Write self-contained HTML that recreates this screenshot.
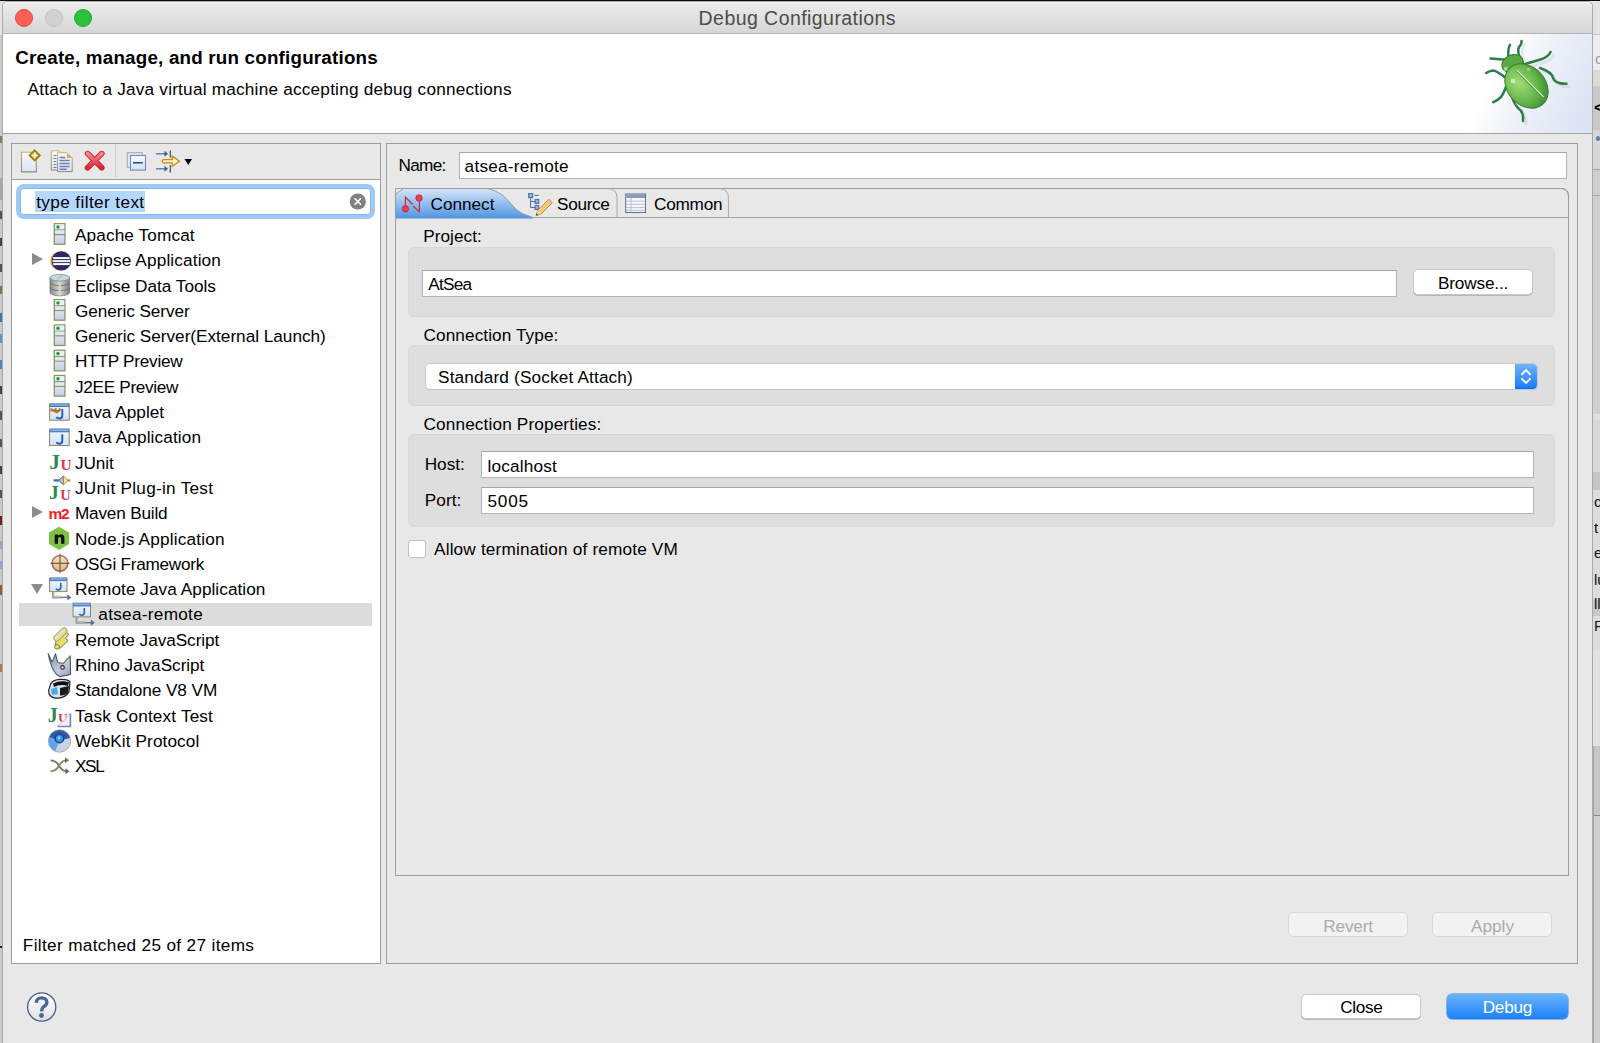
<!DOCTYPE html>
<html><head><meta charset="utf-8"><style>
*{margin:0;padding:0;box-sizing:border-box}
html,body{width:1600px;height:1043px;overflow:hidden;background:#e8e8e8}
body{position:relative;font-family:"Liberation Sans",sans-serif}
.t{position:absolute;white-space:nowrap;line-height:1;z-index:2}
#bg{position:absolute;left:0;top:0;width:1600px;height:1043px;background:#e6e6e6}
#win{position:absolute;left:2px;top:1px;width:1591px;height:1045px;background:#e8e8e8;border:1px solid #a9a9a9;border-radius:5px 5px 0 0;overflow:hidden}
#titlebar{position:absolute;left:3px;top:2px;width:1589px;height:32px;background:linear-gradient(#ececec,#d6d6d6);border-bottom:1px solid #b4b4b4;border-radius:5px 5px 0 0;box-shadow:inset 0 1px 0 #f6f6f6}
.tl{position:absolute;width:18px;height:18px;border-radius:50%;border:1px solid}
#header{position:absolute;left:3px;top:34px;width:1589px;height:100px;background:#fff;border-bottom:1px solid #a5a5a5;overflow:hidden}
#lpanel{position:absolute;left:11px;top:143px;width:370px;height:821px;background:#fff;border:1px solid #9d9d9d}
#ltool{position:absolute;left:0;top:0;width:368px;height:36px;background:#e8e8e8;border-bottom:1px solid #9d9d9d}
#tsep{position:absolute;left:115px;top:144px;width:1px;height:33px;background:#cfcfcf}
#filter{position:absolute;left:16px;top:184px;width:359px;height:35px;border:4.5px solid #9fcaf7;border-radius:8px;background:#fff;box-shadow:inset 0 0 0 1px #86b5e6}
#fsel{position:absolute;left:15px;top:3px;width:110px;height:21px;background:#b4d7fe}
#fclear{position:absolute;left:350px;top:193px;width:16px;height:16px;border-radius:50%;background:#808080}
#sel{position:absolute;left:19px;top:603px;width:353px;height:23px;background:#dcdcdc}
.tri-r{position:absolute;width:0;height:0;border-top:6.5px solid transparent;border-bottom:6.5px solid transparent;border-left:11px solid #8c8c8c}
.tri-d{position:absolute;width:0;height:0;border-left:6.75px solid transparent;border-right:6.75px solid transparent;border-top:10.5px solid #8c8c8c}
.ic{position:absolute;width:22px;height:22px}
#rpanel{position:absolute;left:386px;top:143px;width:1192px;height:821px;border:1px solid #9d9d9d}
.tf{position:absolute;background:#fff;border:1px solid #b4b4b4;border-top-color:#a6a6a6}
#tabfolder{position:absolute;left:395px;top:188px;width:1174px;height:688px;border:1px solid #9d9d9d;border-radius:0 7px 0 0}
#tabrow{position:absolute;left:396px;top:217px;width:1172px;height:1px;background:#9d9d9d}
.grp{position:absolute;background:#dedede;border:1px solid #d7d7d7;border-radius:6px}
.btn{position:absolute;background:#fff;border:1px solid #c8c8c8;border-radius:5px;box-shadow:0 1px 0 #b8b8b8}
.btn.dis{background:#f2f2f2;border-color:#d9d9d9;box-shadow:none}
#combo{position:absolute;left:426px;top:364px;width:111px;height:25px;width:1111px;background:#fff;border-radius:4px;box-shadow:0 0 0 1px #c8c8c8, 0 1px 0 #b0b0b0}
#chk{position:absolute;left:408px;top:540px;width:18px;height:18px;background:#fff;border:1px solid #c0c0c0;border-radius:3px}
#help{position:absolute;left:27px;top:993px;width:30px;height:30px;border-radius:50%;border:1.5px solid #4a6283;background:linear-gradient(#fff,#e4e4e4)}
#debugbtn{position:absolute;left:1447px;top:994px;width:121px;height:25px;border-radius:5px;background:linear-gradient(#6cb3fa,#1a82fb);box-shadow:0 0 0 0.5px #2f7fe0}
#ov{position:absolute;left:0;top:0;pointer-events:none;z-index:1}
#hgrad{position:absolute;right:0;top:0;width:170px;height:99px;background:linear-gradient(116deg, rgba(255,255,255,0) 42%, #eef1f9 62%, #e3e8f5 82%, #dbe2f3 100%)}

</style></head><body>
<div id="bg"></div>
<div style="position:absolute;left:0;top:0;width:1600px;height:1px;background:#0a0c10;z-index:3"></div>
<div style="position:absolute;left:0;top:1px;width:2px;height:1042px;background:#c9c9c9"></div>
<div style="position:absolute;left:0;top:1px;width:2px;height:34px;background:#e4e4e4"></div>
<div style="position:absolute;left:0;top:136px;width:2px;height:7px;background:#8a7a5a"></div>
<div style="position:absolute;left:0;top:178px;width:2px;height:22px;background:#a8a8a8"></div>
<div style="position:absolute;left:0;top:211px;width:2px;height:8px;background:#555"></div>
<div style="position:absolute;left:0;top:238px;width:2px;height:8px;background:#444"></div>
<div style="position:absolute;left:0;top:264px;width:2px;height:8px;background:#555"></div>
<div style="position:absolute;left:0;top:286px;width:2px;height:8px;background:#8a7050"></div>
<div style="position:absolute;left:0;top:313px;width:2px;height:9px;background:#4a70a8"></div>
<div style="position:absolute;left:0;top:334px;width:2px;height:9px;background:#6a90c0"></div>
<div style="position:absolute;left:0;top:360px;width:2px;height:9px;background:#5a80b8"></div>
<div style="position:absolute;left:0;top:386px;width:2px;height:8px;background:#444"></div>
<div style="position:absolute;left:0;top:411px;width:2px;height:9px;background:#555"></div>
<div style="position:absolute;left:0;top:439px;width:2px;height:8px;background:#555"></div>
<div style="position:absolute;left:0;top:466px;width:2px;height:8px;background:#444"></div>
<div style="position:absolute;left:0;top:490px;width:2px;height:8px;background:#555"></div>
<div style="position:absolute;left:0;top:516px;width:2px;height:9px;background:#6a2020"></div>
<div style="position:absolute;left:0;top:541px;width:2px;height:8px;background:#8aa8d0"></div>
<div style="position:absolute;left:0;top:561px;width:2px;height:8px;background:#8aa8d0"></div>
<div style="position:absolute;left:0;top:585px;width:2px;height:10px;background:#8a6030"></div>
<div style="position:absolute;left:0;top:664px;width:2px;height:8px;background:#a08050"></div>
<div style="position:absolute;left:0;top:946px;width:2px;height:2px;background:#222"></div>
<div style="position:absolute;left:1593px;top:1px;width:7px;height:33px;background:#e4e4e4"></div>
<div style="position:absolute;left:1593px;top:34px;width:7px;height:1px;background:#c4c4c4"></div>
<div style="position:absolute;left:1593px;top:35px;width:7px;height:35px;background:#ededed"></div>
<div style="position:absolute;left:1593px;top:70px;width:7px;height:16px;background:#d9d9d9"></div>
<div style="position:absolute;left:1593px;top:79px;width:7px;height:2px;background:#e8dcc0"></div>
<div style="position:absolute;left:1593px;top:86px;width:7px;height:44px;background:#c9c9c9"></div>
<div style="position:absolute;left:1593px;top:130px;width:7px;height:39px;background:#d6d6d6"></div>
<div style="position:absolute;left:1593px;top:169px;width:7px;height:1px;background:#a8a8a8"></div>
<div style="position:absolute;left:1593px;top:170px;width:7px;height:25px;background:#cfcfcf"></div>
<div style="position:absolute;left:1593px;top:195px;width:7px;height:1px;background:#a8a8a8"></div>
<div style="position:absolute;left:1593px;top:196px;width:7px;height:218px;background:#cfcfcf"></div>
<div style="position:absolute;left:1593px;top:414px;width:7px;height:6px;background:#e0e0e0"></div>
<div style="position:absolute;left:1593px;top:420px;width:7px;height:70px;background:#d8d8d8"></div>
<div style="position:absolute;left:1593px;top:472px;width:7px;height:18px;background:#c6c6c6"></div>
<div style="position:absolute;left:1593px;top:490px;width:7px;height:160px;background:#dcdcdc"></div>
<div style="position:absolute;left:1593px;top:600px;width:7px;height:16px;background:#c8c8c8"></div>
<div style="position:absolute;left:1593px;top:650px;width:7px;height:96px;background:#e2e2e2"></div>
<div style="position:absolute;left:1593px;top:746px;width:7px;height:69px;background:#c6c6c6"></div>
<div style="position:absolute;left:1593px;top:815px;width:7px;height:1px;background:#8a8a8a"></div>
<div style="position:absolute;left:1593px;top:816px;width:7px;height:227px;background:#d0d0d0"></div>
<div class="t" style="left:1594.00px;top:494.30px;font-size:15px;color:#111;letter-spacing:0.000px;">c</div>
<div class="t" style="left:1594.00px;top:520.30px;font-size:15px;color:#111;letter-spacing:0.000px;">t</div>
<div class="t" style="left:1594.00px;top:545.30px;font-size:15px;color:#111;letter-spacing:0.000px;">e</div>
<div class="t" style="left:1594.00px;top:572.30px;font-size:15px;color:#111;letter-spacing:0.000px;">lu</div>
<div class="t" style="left:1594.00px;top:596.30px;font-size:15px;color:#111;letter-spacing:0.000px;">ll</div>
<div class="t" style="left:1594.00px;top:618.30px;font-size:15px;color:#111;letter-spacing:0.000px;">Pr</div>
<div class="t" style="left:1595.00px;top:51.30px;font-size:15px;color:#999;letter-spacing:0.000px;">c</div>
<div class="t" style="left:1594.00px;top:98.61px;font-size:17px;color:#000;font-weight:bold;letter-spacing:0.000px;">&lt;</div>
<div style="position:absolute;left:1596px;top:136px;width:4px;height:5px;background:#5a7fb0;border-radius:2px"></div>
<div style="position:absolute;left:1593px;top:746px;width:1px;height:297px;background:#a8a8a8"></div>
<div id="win"></div>
<div id="titlebar"></div>
<div class="tl" style="left:15px;top:9px;background:#fe5f57;border-color:#e2463f"></div>
<div class="tl" style="left:45px;top:9px;background:#d1d1d1;border-color:#c3c3c3"></div>
<div class="tl" style="left:74px;top:9px;background:#29c23e;border-color:#1aab29"></div>
<div class="t" style="left:698.60px;top:8.69px;font-size:19.5px;color:#4c4c4c;letter-spacing:0.439px;">Debug Configurations</div>
<div id="header"><div id="hgrad"></div></div>
<div class="t" style="left:15.30px;top:49.09px;font-size:18.8px;color:#000;font-weight:bold;letter-spacing:0.205px;">Create, manage, and run configurations</div>
<div class="t" style="left:27.60px;top:81.24px;font-size:17.2px;color:#000;letter-spacing:0.218px;">Attach to a Java virtual machine accepting debug connections</div>
<div id="lpanel"><div id="ltool"></div></div>
<div id="tsep"></div>
<div id="filter"><div id="fsel"></div></div>
<div class="t" style="left:36.20px;top:193.94px;font-size:17.2px;color:#000;letter-spacing:0.383px;">type filter text</div>
<div id="sel"></div>
<div class="t" style="left:75.00px;top:226.94px;font-size:17.2px;color:#000;letter-spacing:0.121px;">Apache Tomcat</div>
<div class="t" style="left:75.00px;top:252.24px;font-size:17.2px;color:#000;letter-spacing:0.142px;">Eclipse Application</div>
<div class="tri-r" style="left:32px;top:253.3px"></div>
<div class="t" style="left:75.00px;top:277.54px;font-size:17.2px;color:#000;letter-spacing:-0.012px;">Eclipse Data Tools</div>
<div class="t" style="left:75.00px;top:302.84px;font-size:17.2px;color:#000;letter-spacing:-0.067px;">Generic Server</div>
<div class="t" style="left:75.00px;top:328.14px;font-size:17.2px;color:#000;letter-spacing:-0.015px;">Generic Server(External Launch)</div>
<div class="t" style="left:75.00px;top:353.44px;font-size:17.2px;color:#000;letter-spacing:-0.245px;">HTTP Preview</div>
<div class="t" style="left:75.00px;top:378.74px;font-size:17.2px;color:#000;letter-spacing:-0.323px;">J2EE Preview</div>
<div class="t" style="left:75.00px;top:404.04px;font-size:17.2px;color:#000;letter-spacing:0.028px;">Java Applet</div>
<div class="t" style="left:75.00px;top:429.34px;font-size:17.2px;color:#000;letter-spacing:0.115px;">Java Application</div>
<div class="t" style="left:75.00px;top:454.64px;font-size:17.2px;color:#000;letter-spacing:-0.104px;">JUnit</div>
<div class="t" style="left:75.00px;top:479.94px;font-size:17.2px;color:#000;letter-spacing:0.267px;">JUnit Plug-in Test</div>
<div class="t" style="left:75.00px;top:505.24px;font-size:17.2px;color:#000;letter-spacing:-0.199px;">Maven Build</div>
<div class="tri-r" style="left:32px;top:506.3px"></div>
<div class="t" style="left:75.00px;top:530.54px;font-size:17.2px;color:#000;letter-spacing:0.190px;">Node.js Application</div>
<div class="t" style="left:75.00px;top:555.84px;font-size:17.2px;color:#000;letter-spacing:-0.266px;">OSGi Framework</div>
<div class="t" style="left:75.00px;top:581.14px;font-size:17.2px;color:#000;letter-spacing:0.055px;">Remote Java Application</div>
<div class="tri-d" style="left:31px;top:583.7px"></div>
<div class="t" style="left:98.30px;top:606.44px;font-size:17.2px;color:#000;letter-spacing:0.290px;">atsea-remote</div>
<div class="t" style="left:75.00px;top:631.74px;font-size:17.2px;color:#000;letter-spacing:-0.053px;">Remote JavaScript</div>
<div class="t" style="left:75.00px;top:657.04px;font-size:17.2px;color:#000;letter-spacing:-0.035px;">Rhino JavaScript</div>
<div class="t" style="left:75.00px;top:682.34px;font-size:17.2px;color:#000;letter-spacing:-0.070px;">Standalone V8 VM</div>
<div class="t" style="left:75.00px;top:707.64px;font-size:17.2px;color:#000;letter-spacing:0.159px;">Task Context Test</div>
<div class="t" style="left:75.00px;top:732.94px;font-size:17.2px;color:#000;letter-spacing:0.094px;">WebKit Protocol</div>
<div class="t" style="left:75.00px;top:758.24px;font-size:17.2px;color:#000;letter-spacing:-1.354px;">XSL</div>
<div class="t" style="left:22.80px;top:937.14px;font-size:17.2px;color:#000;letter-spacing:0.340px;">Filter matched 25 of 27 items</div>
<div id="rpanel"></div>
<div class="t" style="left:398.40px;top:157.44px;font-size:17.2px;color:#000;letter-spacing:-0.663px;">Name:</div>
<div class="tf" style="left:459px;top:152px;width:1108px;height:27px"></div>
<div class="t" style="left:464.60px;top:158.44px;font-size:17.2px;color:#000;letter-spacing:0.245px;">atsea-remote</div>
<div id="tabfolder"></div>
<div id="tabrow"></div>
<div class="t" style="left:430.50px;top:196.14px;font-size:17.2px;color:#000;letter-spacing:-0.012px;">Connect</div>
<div class="t" style="left:557.00px;top:196.14px;font-size:17.2px;color:#000;letter-spacing:-0.305px;">Source</div>
<div class="t" style="left:654.00px;top:196.14px;font-size:17.2px;color:#000;letter-spacing:-0.229px;">Common</div>
<div class="t" style="left:423.30px;top:228.44px;font-size:17.2px;color:#000;letter-spacing:0.027px;">Project:</div>
<div class="grp" style="left:408px;top:247px;width:1147px;height:70px"></div>
<div class="tf" style="left:422px;top:270px;width:975px;height:27px"></div>
<div class="t" style="left:428.30px;top:276.44px;font-size:17.2px;color:#000;letter-spacing:-0.739px;">AtSea</div>
<div class="btn" style="left:1413px;top:269px;width:120px;height:26px"></div>
<div class="t" style="left:1438.00px;top:274.94px;font-size:17.2px;color:#000;letter-spacing:-0.165px;">Browse...</div>
<div class="t" style="left:423.50px;top:326.84px;font-size:17.2px;color:#000;letter-spacing:0.096px;">Connection Type:</div>
<div class="grp" style="left:408px;top:345px;width:1147px;height:61px"></div>
<div id="combo"></div>
<div class="t" style="left:438.00px;top:368.64px;font-size:17.2px;color:#000;letter-spacing:0.162px;">Standard (Socket Attach)</div>
<div class="t" style="left:423.50px;top:416.14px;font-size:17.2px;color:#000;letter-spacing:0.142px;">Connection Properties:</div>
<div class="grp" style="left:408px;top:434px;width:1147px;height:93px"></div>
<div class="t" style="left:424.75px;top:456.44px;font-size:17.2px;color:#000;letter-spacing:-0.040px;">Host:</div>
<div class="tf" style="left:481px;top:451px;width:1053px;height:27px"></div>
<div class="t" style="left:487.50px;top:457.64px;font-size:17.2px;color:#000;letter-spacing:0.193px;">localhost</div>
<div class="t" style="left:424.75px;top:492.04px;font-size:17.2px;color:#000;letter-spacing:0.052px;">Port:</div>
<div class="tf" style="left:481px;top:487px;width:1053px;height:27px"></div>
<div class="t" style="left:487.50px;top:493.34px;font-size:17.2px;color:#000;letter-spacing:0.777px;">5005</div>
<div id="chk"></div>
<div class="t" style="left:434.00px;top:540.84px;font-size:17.2px;color:#000;letter-spacing:0.173px;">Allow termination of remote VM</div>
<div class="btn dis" style="left:1288px;top:912px;width:120px;height:25px"></div>
<div class="t" style="left:1323.30px;top:917.64px;font-size:17.2px;color:#ababab;letter-spacing:-0.191px;">Revert</div>
<div class="btn dis" style="left:1432px;top:912px;width:120px;height:25px"></div>
<div class="t" style="left:1471.00px;top:917.64px;font-size:17.2px;color:#ababab;letter-spacing:0.000px;">Apply</div>
<div class="btn" style="left:1301px;top:994px;width:120px;height:25px"></div>
<div class="t" style="left:1340.30px;top:999.44px;font-size:17.2px;color:#000;letter-spacing:-0.361px;">Close</div>
<div id="debugbtn"></div>
<div class="t" style="left:1482.70px;top:999.44px;font-size:17.2px;color:#fff;letter-spacing:-0.238px;">Debug</div>
<svg id="ov" width="1600" height="1043" viewBox="0 0 1600 1043">
<defs>
<linearGradient id="gPage" x1="0" y1="0" x2="0" y2="1"><stop offset="0" stop-color="#f7f9fd"/><stop offset="1" stop-color="#d9e5f5"/></linearGradient>
<linearGradient id="gPageB" x1="0" y1="0" x2="0" y2="1"><stop offset="0" stop-color="#d2b25e"/><stop offset="1" stop-color="#8c8a74"/></linearGradient>
<linearGradient id="gRedX" x1="0" y1="0" x2="0" y2="1"><stop offset="0" stop-color="#f58a8a"/><stop offset="1" stop-color="#d92a3a"/></linearGradient>
<linearGradient id="gSrvB" x1="0" y1="0" x2="0" y2="1"><stop offset="0" stop-color="#fbfcff"/><stop offset="1" stop-color="#c5cde6"/></linearGradient>
<linearGradient id="gWin" x1="0" y1="0" x2="0" y2="1"><stop offset="0" stop-color="#f4f9ff"/><stop offset="1" stop-color="#cfe4fa"/></linearGradient>
<linearGradient id="gWinT" x1="0" y1="0" x2="0" y2="1"><stop offset="0" stop-color="#6b9bd8"/><stop offset="1" stop-color="#3f77c4"/></linearGradient>
<linearGradient id="gDB" x1="0" y1="0" x2="1" y2="0"><stop offset="0" stop-color="#8a8a8a"/><stop offset="0.5" stop-color="#d8d8d8"/><stop offset="1" stop-color="#7a7a7a"/></linearGradient>
<linearGradient id="gOsgi" x1="0" y1="0" x2="0" y2="1"><stop offset="0" stop-color="#f3e6c0"/><stop offset="1" stop-color="#d7c08a"/></linearGradient>
<linearGradient id="gTab" x1="0" y1="0" x2="0" y2="1"><stop offset="0" stop-color="#d6e6f9"/><stop offset="1" stop-color="#4f95e4"/></linearGradient>
<linearGradient id="gRhino" x1="0" y1="0" x2="1" y2="1"><stop offset="0" stop-color="#7d8aa2"/><stop offset="0.6" stop-color="#c6cedd"/><stop offset="1" stop-color="#8f9bb3"/></linearGradient>
<linearGradient id="gHelp" x1="0" y1="0" x2="0" y2="1"><stop offset="0" stop-color="#ffffff"/><stop offset="1" stop-color="#e1e1e1"/></linearGradient>
<radialGradient id="gBug" cx="0.4" cy="0.35" r="0.7"><stop offset="0" stop-color="#a2dc78"/><stop offset="0.6" stop-color="#66b84c"/><stop offset="1" stop-color="#3f8c36"/></radialGradient>
<radialGradient id="gWK" cx="0.5" cy="0.5" r="0.5"><stop offset="0" stop-color="#dfe8f3"/><stop offset="1" stop-color="#aab8cb"/></radialGradient>
<linearGradient id="gCombo" x1="0" y1="0" x2="0" y2="1"><stop offset="0" stop-color="#72b3f8"/><stop offset="0.9" stop-color="#1d82fb"/><stop offset="1" stop-color="#0a68f6"/></linearGradient>
</defs>

<!-- toolbar: new config -->
<path d="M21.5,152.3 h9.5 l5.3,5.3 v14.3 h-14.8 z" fill="url(#gPage)" stroke="url(#gPageB)" stroke-width="1.1"/>
<path d="M34.7,150.4 l5,5 l-5,5 l-5,-5 z" fill="#e8c860" stroke="#a47a18" stroke-width="1.9"/>
<path d="M34.7,152.3 v6.2 M31.6,155.4 h6.2" stroke="#fff8e0" stroke-width="1.5"/>
<!-- duplicate -->
<path d="M51.3,150.8 h7.7 l2,2 v17.3 h-9.7 z" fill="url(#gPage)" stroke="url(#gPageB)" stroke-width="1"/>
<path d="M53.5,155.5 h3 M53.5,158.5 h3 M53.5,161.5 h3 M53.5,164.5 h3 M53.5,167.5 h3" stroke="#6b80b0" stroke-width="1"/>
<path d="M57.6,152.7 h9.4 l5.2,5.2 v13.7 h-14.6 z" fill="url(#gPage)" stroke="url(#gPageB)" stroke-width="1"/>
<path d="M67,152.7 v5.2 h5.2 z" fill="#d8b060"/>
<path d="M59.5,157.5 h5.8 M59.5,160.5 h10.2 M59.5,163.5 h10.2 M59.5,166.5 h10.2 M59.5,169.3 h7.3" stroke="#6b80b0" stroke-width="1.4"/>
<!-- red x -->
<path d="M87.6,153.6 L101.8,167.8 M101.8,153.6 L87.6,167.8" stroke="#c81a2a" stroke-width="5.6" stroke-linecap="round"/>
<path d="M87.6,153.6 L101.8,167.8 M101.8,153.6 L87.6,167.8" stroke="url(#gRedX)" stroke-width="3.8" stroke-linecap="round"/>
<!-- separator -->
<rect x="115" y="144" width="1" height="33" fill="#cdcdcd"/>
<!-- collapse all -->
<rect x="127.3" y="152.7" width="15" height="14.6" fill="#dde9f7" stroke="#9aa4c4" stroke-width="1"/>
<rect x="130.5" y="155.5" width="15" height="14.6" fill="url(#gWin)" stroke="#7f88a8" stroke-width="1.1"/>
<path d="M133,162.8 h9.8" stroke="#2f5588" stroke-width="1.6"/>
<!-- filter -->
<path d="M156,153.8 h9.5" stroke="#5f88aa" stroke-width="1.5"/><path d="M164.5,150.8 l3.5,3 l-3.5,3 z" fill="#3d5f78"/>
<path d="M156,168.8 h9.5" stroke="#5f88aa" stroke-width="1.5"/><path d="M164.5,165.8 l3.5,3 l-3.5,3 z" fill="#3d5f78"/>
<path d="M170.3,150.4 v7 M170.3,165.2 v7.3" stroke="#23456e" stroke-width="1.1"/>
<path d="M163.5,159.6 h8.7 v-3.5 l7.3,5.1 l-7.3,5.1 v-3.5 h-8.7 q-1.2,0 -1.2,-1.6 q0,-1.6 1.2,-1.6 z" fill="#fff1c4" stroke="#c98a16" stroke-width="1.3"/>
<path d="M184.5,159 h7.5 l-3.75,6 z" fill="#000"/>
<!-- filter clear -->
<circle cx="357.8" cy="201.5" r="8.1" fill="#808080"/>
<path d="M354.6,198.3 l6.4,6.4 M361,198.3 l-6.4,6.4" stroke="#fff" stroke-width="1.6"/>

<path d="M396,218.5 V194.3 L403.5,188.5 H487.5 C492,189.5 497,191.5 502.5,195.2 C507,199 512,205 516.4,209.5 C520,212.5 524,214.5 528.7,215.9 C530.5,216.7 531.8,217.3 533.2,217.6 V218.5 Z" fill="url(#gTab)"/>
<path d="M395.5,218 V194.3 L403.5,188.5 H487.5 C492,189.5 497,191.5 502.5,195.2 C507,199 512,205 516.4,209.5 C520,212.5 524,214.5 528.7,215.9 C530.5,216.7 531.8,217.3 533.2,217.6" fill="none" stroke="#9a9a9a" stroke-width="1"/>
<path d="M533,217.5 H1568.5" stroke="#a3a3a3" stroke-width="1"/>
<path d="M487.8,188.5 H1560.5 Q1568.5,188.5 1568.5,196.5 V876" fill="none" stroke="#9c9c9c" stroke-width="1"/>
<path d="M608,188.5 Q617,189 617,197.5 V217" fill="none" stroke="#a8a8a8" stroke-width="1"/>
<path d="M719.4,188.5 Q728.4,189 728.4,197.5 V217" fill="none" stroke="#a8a8a8" stroke-width="1"/>
<!-- connect icon -->
<path d="M405.4,208.8 V197.2 L411.5,203.2 M410.5,203.6 h2.6 M412.9,206 L419.4,211.6 V198" fill="none" stroke="#d0283a" stroke-width="1.2"/>
<circle cx="405.4" cy="208.8" r="3.2" fill="#e8404e" stroke="#c01a2c" stroke-width="0.7"/>
<circle cx="419" cy="198" r="3.2" fill="#e8404e" stroke="#c01a2c" stroke-width="0.7"/>
<!-- source icon -->
<path d="M530.6,197 V207.5 M530.6,201.5 H535 M530.6,207.5 H535 M534.3,195.4 H538.7" fill="none" stroke="#4a68a8" stroke-width="1"/>
<rect x="528.6" y="193.6" width="4.1" height="4" fill="#9ab0d8" stroke="#4a68a8" stroke-width="1"/>
<rect x="535" y="199.6" width="3.8" height="3.8" fill="#9ab0d8" stroke="#4a68a8" stroke-width="1"/>
<rect x="535" y="205.6" width="3.8" height="3.8" fill="#9ab0d8" stroke="#4a68a8" stroke-width="1"/>
<path d="M536,215.6 L537.5,210.6 L548.8,199.3 L552.3,202.8 L541,214.1 z" fill="#f6c978" stroke="#b88540" stroke-width="0.9"/>
<path d="M536,215.6 L537.5,210.6 L541,214.1 z" fill="#e8d0a0"/>
<path d="M536,215.6 L536.7,213.3 L538.3,214.9 z" fill="#333"/>
<!-- common icon -->
<rect x="625.7" y="194" width="19.8" height="18.5" fill="#f4f6fa" stroke="#5f6d8c" stroke-width="1"/>
<rect x="626.2" y="194.5" width="18.8" height="3.5" fill="#8a9ab8"/>
<path d="M626,201.2 h19.5 M626,204.4 h19.5 M626,207.6 h19.5 M626,210.4 h19.5 M631,198 v14.5" stroke="#a9b4cc" stroke-width="0.8"/>

<path d="M1515,364 H1532.5 Q1537,364 1537,368.5 V384.5 Q1537,389 1532.5,389 H1515 Z" fill="url(#gCombo)"/>
<path d="M1521.4,374.8 l4.6,-4.6 l4.6,4.6 M1521.4,378.4 l4.6,4.6 l4.6,-4.6" fill="none" stroke="#fff" stroke-width="1.9"/>
<circle cx="41.7" cy="1007" r="14.1" fill="url(#gHelp)" stroke="#46608a" stroke-width="1.3"/>
<path d="M36.2,1002.8 C36.5,999.2 38.8,997.8 41.7,997.8 C44.8,997.8 46.9,999.7 46.9,1002.3 C46.9,1004.8 45.2,1005.9 43.6,1006.9 C42.1,1007.9 41.7,1009.2 41.7,1011.6" fill="none" stroke="#4a6590" stroke-width="3.3"/>
<circle cx="41.5" cy="1015.5" r="2.4" fill="#4a6590"/>

<g stroke="#bfc3cc" stroke-width="2.4" fill="none" stroke-linecap="round" opacity="0.35" transform="translate(3,3)">
<path d="M1522,58 Q1516,50 1521.5,41"/><path d="M1525,64 Q1536,61 1542,59 Q1548,57 1550.6,52"/>
<path d="M1540,68 Q1552,72 1553,78 Q1555,84 1566.5,83.7"/><path d="M1511,94 Q1514,104 1518,108 Q1524,112 1523,121"/>
</g>
<g stroke="#2f7d48" stroke-width="2.5" fill="none" stroke-linecap="round" stroke-linejoin="round">
<path d="M1509,60 L1490.6,58.5"/>
<path d="M1509,60 Q1507,50 1510,44.8"/>
<path d="M1523,63 Q1516,52 1519,47 Q1522,44 1521.5,41"/>
<path d="M1525,64 Q1536,61 1542,59 Q1548,57 1550.6,52"/>
<path d="M1506,78 Q1497,71 1493,70.5 Q1489,71 1486.2,73"/>
<path d="M1540,68 Q1552,72 1553,78 Q1555,84 1566.5,83.7"/>
<path d="M1507,84 Q1504,93 1501,97 Q1497,101 1493.2,102.2"/>
<path d="M1511,94 Q1514,104 1518,108 Q1524,112 1523,121"/>
</g>
<ellipse cx="1512.5" cy="63.5" rx="11" ry="8.5" transform="rotate(-25 1512.5 63.5)" fill="#5aa844" stroke="#3a7f38" stroke-width="1"/>
<ellipse cx="1526.5" cy="86" rx="19" ry="24.5" transform="rotate(-42 1526.5 86)" fill="url(#gBug)" stroke="#3a7f38" stroke-width="1"/>
<path d="M1517,70.4 Q1530,83 1543.5,97" stroke="#d8efc8" stroke-width="1.1" fill="none"/>
<path d="M1517,70.4 Q1530,83 1543.5,97" stroke="#3a7f38" stroke-width="0.8" fill="none" transform="translate(-0.8,0.8)"/>
<rect x="1511" y="79" width="4" height="4" fill="#e0f4d0" opacity="0.75"/>
<rect x="1504" y="67" width="3.5" height="3.5" fill="#d8f0c8" opacity="0.6"/>
<rect x="1527" y="68" width="3" height="3" fill="#c8e8b0" opacity="0.5"/>
<g transform="translate(48.00,222.50)"><rect x="6.3" y="1.2" width="10.6" height="20.6" fill="url(#gSrvB)" stroke="#8a9468" stroke-width="1.3"/>
<line x1="6.2" y1="7.3" x2="16.9" y2="7.3" stroke="#8a9468" stroke-width="1.2"/>
<line x1="6.2" y1="12.1" x2="16.9" y2="12.1" stroke="#8a9468" stroke-width="1.2"/>
<rect x="7" y="2" width="9.2" height="4.7" fill="#eceef8"/>
<circle cx="10" cy="4.5" r="1.7" fill="#13a02a"/>
<rect x="7" y="8" width="9.2" height="3.4" fill="#e2e5f2"/></g><g transform="translate(48.00,247.80)"><circle cx="12" cy="13.1" r="9.7" fill="#f29a3a"/>
<circle cx="13.4" cy="13.1" r="9.7" fill="#2f2868"/>
<rect x="5.2" y="9.3" width="16.4" height="2" fill="#fff"/>
<rect x="4.6" y="12.3" width="17.6" height="2" fill="#f4f4fa"/>
<rect x="5.2" y="15.3" width="16.4" height="2" fill="#fff"/></g><g transform="translate(48.00,273.10)"><path d="M2,4.5 v15 a9.8,3.2 0 0 0 19.6,0 v-15 z" fill="url(#gDB)" stroke="#7a7a7a" stroke-width="0.8"/><path d="M2,9.5 a9.8,3 0 0 0 19.6,0" fill="none" stroke="#6d6d6d" stroke-width="0.9"/><path d="M2,14.5 a9.8,3 0 0 0 19.6,0" fill="none" stroke="#6d6d6d" stroke-width="0.9"/><ellipse cx="11.8" cy="4.6" rx="9.8" ry="3.3" fill="#b9e0e0" stroke="#8a8a8a" stroke-width="0.8"/><path d="M9,6 L14,3" stroke="#f0a0a0" stroke-width="1.2"/><rect x="10.8" y="11.5" width="2" height="1.8" fill="#e8e0a0"/><rect x="10.8" y="16.5" width="2" height="1.8" fill="#e8e0a0"/><rect x="10.8" y="20.5" width="2" height="1.8" fill="#e8e0a0"/></g><g transform="translate(48.00,298.40)"><rect x="6.3" y="1.2" width="10.6" height="20.6" fill="url(#gSrvB)" stroke="#8a9468" stroke-width="1.3"/>
<line x1="6.2" y1="7.3" x2="16.9" y2="7.3" stroke="#8a9468" stroke-width="1.2"/>
<line x1="6.2" y1="12.1" x2="16.9" y2="12.1" stroke="#8a9468" stroke-width="1.2"/>
<rect x="7" y="2" width="9.2" height="4.7" fill="#eceef8"/>
<circle cx="10" cy="4.5" r="1.7" fill="#13a02a"/>
<rect x="7" y="8" width="9.2" height="3.4" fill="#e2e5f2"/></g><g transform="translate(48.00,323.70)"><rect x="6.3" y="1.2" width="10.6" height="20.6" fill="url(#gSrvB)" stroke="#8a9468" stroke-width="1.3"/>
<line x1="6.2" y1="7.3" x2="16.9" y2="7.3" stroke="#8a9468" stroke-width="1.2"/>
<line x1="6.2" y1="12.1" x2="16.9" y2="12.1" stroke="#8a9468" stroke-width="1.2"/>
<rect x="7" y="2" width="9.2" height="4.7" fill="#eceef8"/>
<circle cx="10" cy="4.5" r="1.7" fill="#13a02a"/>
<rect x="7" y="8" width="9.2" height="3.4" fill="#e2e5f2"/></g><g transform="translate(48.00,349.00)"><rect x="6.3" y="1.2" width="10.6" height="20.6" fill="url(#gSrvB)" stroke="#8a9468" stroke-width="1.3"/>
<line x1="6.2" y1="7.3" x2="16.9" y2="7.3" stroke="#8a9468" stroke-width="1.2"/>
<line x1="6.2" y1="12.1" x2="16.9" y2="12.1" stroke="#8a9468" stroke-width="1.2"/>
<rect x="7" y="2" width="9.2" height="4.7" fill="#eceef8"/>
<circle cx="10" cy="4.5" r="1.7" fill="#13a02a"/>
<rect x="7" y="8" width="9.2" height="3.4" fill="#e2e5f2"/></g><g transform="translate(48.00,374.30)"><rect x="6.3" y="1.2" width="10.6" height="20.6" fill="url(#gSrvB)" stroke="#8a9468" stroke-width="1.3"/>
<line x1="6.2" y1="7.3" x2="16.9" y2="7.3" stroke="#8a9468" stroke-width="1.2"/>
<line x1="6.2" y1="12.1" x2="16.9" y2="12.1" stroke="#8a9468" stroke-width="1.2"/>
<rect x="7" y="2" width="9.2" height="4.7" fill="#eceef8"/>
<circle cx="10" cy="4.5" r="1.7" fill="#13a02a"/>
<rect x="7" y="8" width="9.2" height="3.4" fill="#e2e5f2"/></g><g transform="translate(48.00,399.60)"><rect x="1.6" y="4.2" width="19.6" height="16.4" fill="url(#gWin)" stroke="#8c8466" stroke-width="1"/>
<rect x="1.6" y="3.8" width="19.6" height="3.6" fill="url(#gWinT)"/>
<line x1="3" y1="5.5" x2="20" y2="5.5" stroke="#a8c8ee" stroke-width="0.8"/>
<path d="M2.5,8.5 L6,10 L8,8 L10,10 L12,8 L13,11 L9,14 L5,12 L2.5,12 z" fill="#b8722c"/><circle cx="9.5" cy="9.5" r="1" fill="#fff"/>
<path d="M14.3,9.3 v6.8 q0,2.8 -3,2.8 q-2.2,0 -2.8,-1.6" fill="none" stroke="#2f63b8" stroke-width="2"/></g><g transform="translate(48.00,424.90)"><rect x="1.6" y="4.2" width="19.6" height="16.4" fill="url(#gWin)" stroke="#8c8466" stroke-width="1"/>
<rect x="1.6" y="3.8" width="19.6" height="3.6" fill="url(#gWinT)"/>
<line x1="3" y1="5.5" x2="20" y2="5.5" stroke="#a8c8ee" stroke-width="0.8"/>

<path d="M14.3,9.3 v6.8 q0,2.8 -3,2.8 q-2.2,0 -2.8,-1.6" fill="none" stroke="#2f63b8" stroke-width="2"/></g><g transform="translate(48.00,450.20)"><text x="1.2" y="18.9" font-family="Liberation Serif" font-weight="bold" font-size="21.5" fill="#2a8a50">J</text><text x="12.6" y="19.7" font-family="Liberation Serif" font-weight="bold" font-size="15.5" fill="#d83a50">U</text></g><g transform="translate(48.00,475.50)"><path d="M5.6,4.9 h5.5" stroke="#3a6ad0" stroke-width="2.2"/>
<path d="M10.6,4.9 l4.9,-4.4 l0,8.8 z" fill="#a8c0e0" stroke="#3a6ad0" stroke-width="1"/>
<path d="M15.5,0.5 l4.5,4.4 l-4.5,4.4 z" fill="#f8e8a8" stroke="#c08a10" stroke-width="1"/>
<path d="M19.8,4.9 h2.4" stroke="#c08a10" stroke-width="2.2"/><text x="0.8999999999999999" y="23.2" font-family="Liberation Serif" font-weight="bold" font-size="19.5" fill="#2a8a50">J</text><text x="12.299999999999999" y="24.0" font-family="Liberation Serif" font-weight="bold" font-size="14.5" fill="#d83a50">U</text></g><g transform="translate(48.00,500.80)"><text x="0.6" y="18.3" font-family="Liberation Sans" font-weight="bold" font-size="15.5" fill="#f21d1d" letter-spacing="-1.3">m2</text></g><g transform="translate(48.00,526.10)"><path d="M11,0.7 L21,6.5 L21,18 L11,23.8 L1,18 L1,6.5 z" fill="#7dc243"/>
<path d="M6.7,17.6 v-9.2 h3.3 v1.2 q1,-1.5 3,-1.5 q3.4,0 3.4,3.7 v5.8 h-3.3 v-5.2 q0,-1.6 -1.4,-1.6 q-1.7,0 -1.7,2 v4.8 z" fill="#111"/></g><g transform="translate(48.00,551.40)"><circle cx="12" cy="11.9" r="7.8" fill="url(#gOsgi)" stroke="#a8705a" stroke-width="1.6"/>
<line x1="2.5" y1="11.9" x2="21.5" y2="11.9" stroke="#7a4a3a" stroke-width="1.1"/>
<line x1="12" y1="2.3" x2="12" y2="21.5" stroke="#7a4a3a" stroke-width="1.1"/></g><g transform="translate(48.00,576.70)"><rect x="1.6" y="1.3" width="17.4" height="13.6" fill="url(#gWin)" stroke="#8c8466" stroke-width="1"/>
<rect x="1.6" y="0.8" width="17.4" height="3.6" fill="url(#gWinT)"/>
<line x1="3" y1="2.4" x2="18" y2="2.4" stroke="#a8c8ee" stroke-width="0.8"/>
<path d="M12.8,6 v4.6 q0,2.6 -2.6,2.6 q-1.7,0 -2.3,-1.3" fill="none" stroke="#2f63b8" stroke-width="1.6"/>
<path d="M4.8,15 v6 h9" fill="none" stroke="#8f9ac0" stroke-width="1.6"/>
<path d="M6,15 v4.6 h8" fill="none" stroke="#d8b868" stroke-width="1"/>
<path d="M13.5,20.7 h6" stroke="#6a7590" stroke-width="1.4"/>
<path d="M19.3,17.6 l4,3.1 l-4,3.1 z" fill="#5f6b86"/></g><g transform="translate(71.50,602.00)"><rect x="1.6" y="1.3" width="17.4" height="13.6" fill="url(#gWin)" stroke="#8c8466" stroke-width="1"/>
<rect x="1.6" y="0.8" width="17.4" height="3.6" fill="url(#gWinT)"/>
<line x1="3" y1="2.4" x2="18" y2="2.4" stroke="#a8c8ee" stroke-width="0.8"/>
<path d="M12.8,6 v4.6 q0,2.6 -2.6,2.6 q-1.7,0 -2.3,-1.3" fill="none" stroke="#2f63b8" stroke-width="1.6"/>
<path d="M4.8,15 v6 h9" fill="none" stroke="#8f9ac0" stroke-width="1.6"/>
<path d="M6,15 v4.6 h8" fill="none" stroke="#d8b868" stroke-width="1"/>
<path d="M13.5,20.7 h6" stroke="#6a7590" stroke-width="1.4"/>
<path d="M19.3,17.6 l4,3.1 l-4,3.1 z" fill="#5f6b86"/></g><g transform="translate(48.00,627.30)"><path d="M8.5,11.5 L16.5,3.2 L21,7.2 L17.5,10.5 L20,13.5 L12,21 L7.2,18.5 z" fill="#ecdf5c" stroke="#3f5a8a" stroke-width="0.8"/>
<path d="M6.2,9 L14.2,1 Q16.5,-0.5 18.5,1.5 Q20,3.5 18.5,5.5 L10.5,13.5 Q8.5,15 6.5,13 Q4.8,11 6.2,9 z" fill="#ddd8a0" stroke="#9a9660" stroke-width="0.9"/>
<path d="M7.5,11.5 L15.5,3.5" stroke="#f4f0c8" stroke-width="1.2"/>
<circle cx="9" cy="19.5" r="2.4" fill="#f0e040" stroke="#3f5a8a" stroke-width="0.7"/></g><g transform="translate(48.00,652.60)"><path d="M0.2,1 L4,9.5 L7.6,1.2 L9.6,9.8 L15,11 L22.3,3.2 L22.6,21.8 L12,24 Q4,21 0.2,1 z" fill="url(#gRhino)" stroke="#4a5a78" stroke-width="1.1" stroke-linejoin="round"/>
<path d="M9.6,9.8 L15,11 L22.3,3.2" fill="none" stroke="#c89870" stroke-width="0.7"/>
<circle cx="14.5" cy="14.8" r="1.8" fill="#fff" stroke="#222" stroke-width="1.2"/></g><g transform="translate(48.00,677.90)"><path d="M2,8 Q3,2 12,1.5 Q20,1 22,4 L21,14 Q18,19 12,20 Q4,21.5 1,16 Q0,12 2,8 z" fill="#d9e4ef" stroke="#222" stroke-width="1.2"/>
<path d="M5,5.5 Q12,2 21,4 L20,8 Q12,6 6,9 z" fill="#111"/>
<path d="M12,10 L21,8 L20,15 Q16,18 12,17.5 z" fill="#1a1a1a"/>
<path d="M3,11 L9,9 L10,16 L4,17 z" fill="#49a8e8"/></g><g transform="translate(48.00,703.20)"><text x="-0.3" y="19.3" font-family="Liberation Serif" font-weight="bold" font-size="20" fill="#2a8a50">J</text><text x="10" y="18.6" font-family="Liberation Serif" font-weight="bold" font-size="13.5" fill="#d83a50">U</text><path d="M22.4,10.2 V23.3 H9.3 Z" fill="#ececf8" fill-opacity="0.75"/><path d="M22.4,10.2 V23.3 H9.3" fill="none" stroke="#8282bc" stroke-width="1.7"/><path d="M22.4,10.2 L9.3,23.3" stroke="#b8b8e0" stroke-width="0.8"/></g><g transform="translate(48.00,728.50)"><path d="M11.5,12.5 L0.98,8.67 A11.2,11.2 0 0 1 22.32,9.60 Z" fill="#2f58a8"/><path d="M11.5,12.5 L22.32,9.60 A11.2,11.2 0 0 1 7.30,22.88 Z" fill="#c9d2e0"/><path d="M11.5,12.5 L7.30,22.88 A11.2,11.2 0 0 1 0.98,8.67 Z" fill="#62a4ea"/><circle cx="11.5" cy="12.5" r="11.2" fill="none" stroke="#8a98b0" stroke-width="0.7"/><circle cx="11.5" cy="10" r="4.3" fill="#2e92ec" stroke="#1a3f78" stroke-width="1.3"/><circle cx="11" cy="9.3" r="1.5" fill="#8cd0ff"/></g><g transform="translate(48.00,753.80)"><path d="M2.5,6.5 Q8,6.5 11,12 Q14,17.5 19,17.5" fill="none" stroke="#7a7a6a" stroke-width="1.8"/>
<path d="M2.5,17.5 Q8,17.5 11,12 Q14,6.5 18,6.5" fill="none" stroke="#8f8560" stroke-width="1.8"/>
<path d="M17,3.5 l4,3 l-4,3 z" fill="#7a6a40"/>
<path d="M17.5,14.5 l4,3 l-4,3 z" fill="#5a6a70"/></g></svg>
</body></html>
